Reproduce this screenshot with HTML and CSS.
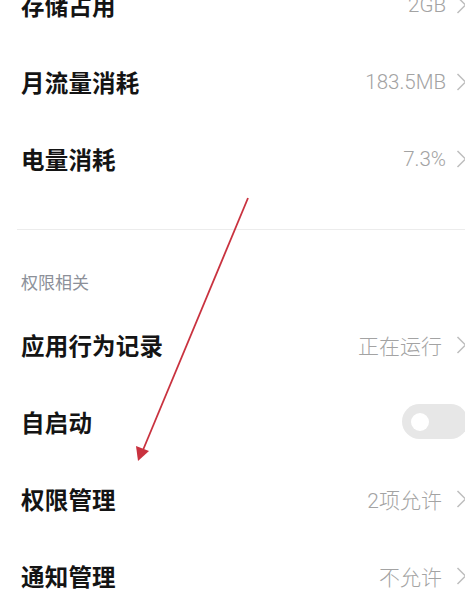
FILE: index.html
```html
<!DOCTYPE html>
<html lang="zh-CN">
<head>
<meta charset="utf-8">
<link rel="stylesheet" href="styles.css">
</head>
<body>
<div class="page">
  <div class="list">
    <div class="row"><span class="title">存储占用</span><span class="value">2GB<svg class="chev" viewBox="0 0 10 18"><polyline points="1,1 9,9 1,17"/></svg></span></div>
    <div class="row"><span class="title">月流量消耗</span><span class="value">183.5MB<svg class="chev" viewBox="0 0 10 18"><polyline points="1,1 9,9 1,17"/></svg></span></div>
    <div class="row"><span class="title">电量消耗</span><span class="value">7.3%<svg class="chev" viewBox="0 0 10 18"><polyline points="1,1 9,9 1,17"/></svg></span></div>
  </div>
  <div class="divider"></div>
  <div class="section">权限相关</div>
  <div class="list">
    <div class="row"><span class="title">应用行为记录</span><span class="value cjk">正在运行<svg class="chev" viewBox="0 0 10 18"><polyline points="1,1 9,9 1,17"/></svg></span></div>
    <div class="row"><span class="title">自启动</span><span class="toggle"><span class="knob"></span></span></div>
    <div class="row"><span class="title">权限管理</span><span class="value cjk">2项允许<svg class="chev" viewBox="0 0 10 18"><polyline points="1,1 9,9 1,17"/></svg></span></div>
    <div class="row"><span class="title">通知管理</span><span class="value cjk">不允许<svg class="chev" viewBox="0 0 10 18"><polyline points="1,1 9,9 1,17"/></svg></span></div>
  </div>
  <svg class="arrow" width="465" height="600" viewBox="0 0 465 600">
    <line x1="248" y1="198" x2="143" y2="450" />
    <polygon points="138,461 136,446 149,451" />
  </svg>
</div>
</body>
</html>
```
FILE: styles.css
```css
html, body {
  margin: 0;
  padding: 0;
  background: #ffffff;
  overflow: hidden;
}
.page {
  position: relative;
  width: 465px;
  height: 600px;
  overflow: hidden;
  font-family: "Noto Sans CJK SC", "Noto Sans", sans-serif;
}
.list:first-child {
  margin-top: -34px;
}
.row {
  height: 77px;
  display: flex;
  align-items: center;
  justify-content: space-between;
  padding-left: 21px;
}
.title {
  font-size: 23.5px;
  font-weight: 700;
  color: #141414;
  letter-spacing: 0.2px;
}
.value {
  display: flex;
  align-items: center;
  font-family: "Roboto", "Noto Sans CJK SC", sans-serif;
  font-weight: 300;
  font-size: 20.5px;
  color: #a3a3a3;
  margin-right: -2px;
}
.value.cjk {
  font-size: 21px;
}
.value.cjk .chev {
  margin-left: 14px;
}
.chev {
  width: 11px;
  height: 18px;
  margin-left: 10px;
  fill: none;
  stroke: #bdbdbd;
  stroke-width: 1.5;
}
.divider {
  margin-top: 32px;
  margin-left: 17px;
  height: 1px;
  background: #ececec;
}
.section {
  height: 76px;
  padding-left: 21px;
  font-size: 17px;
  color: #8c9099;
  line-height: 104px;
}
.toggle {
  width: 66px;
  height: 35px;
  border-radius: 18px;
  background: #e7e7e7;
  margin-right: -3px;
  display: flex;
  align-items: center;
}
.knob {
  width: 18px;
  height: 18px;
  border-radius: 50%;
  background: #ffffff;
  margin-left: 9px;
}
.arrow {
  position: absolute;
  left: 0;
  top: 0;
  pointer-events: none;
}
.arrow line {
  stroke: #c9323f;
  stroke-width: 1.8;
}
.arrow polygon {
  fill: #c9323f;
}
```
